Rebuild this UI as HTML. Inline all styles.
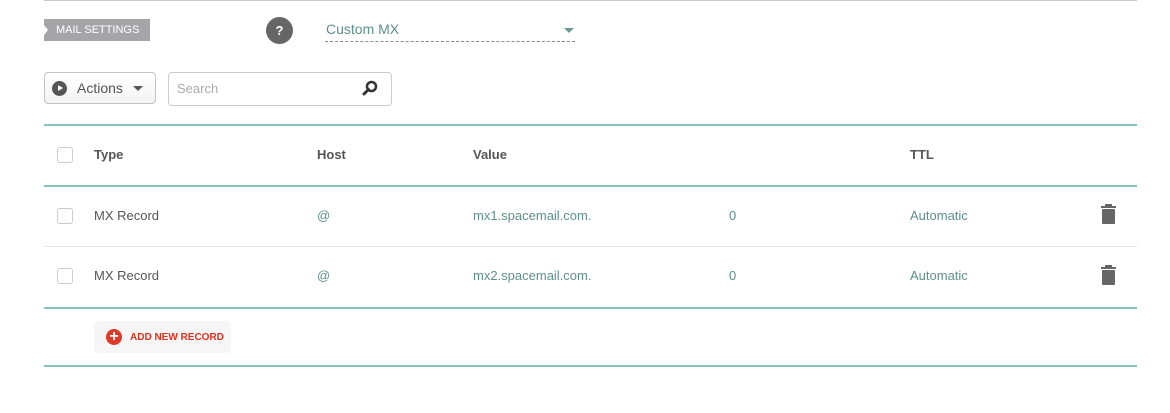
<!DOCTYPE html>
<html><head><style>
body{margin:0;width:1170px;height:413px;background:#fff;font-family:"Liberation Sans",sans-serif;position:relative;overflow:hidden}
.a{position:absolute}
.t{font-size:13px;color:#555}
.g{font-size:13px;color:#5e8f8b}
.hl{position:absolute;left:44px;width:1093px;height:2px;background:#85c2bd}
.cb{position:absolute;left:57px;width:14px;height:14px;border:1px solid #ccc;border-radius:3px;background:#fff}
.h{font-size:13px;font-weight:bold;color:#555}
</style></head><body>
<div class="a" style="left:44px;top:0;width:1093px;height:1px;background:#ccc"></div>
<div class="a" style="left:44px;top:19px;width:106px;height:22px;background:#a5a5a7;color:#fff;font-size:11px;line-height:22px;padding-left:12px;box-sizing:border-box">MAIL SETTINGS</div>
<div class="a" style="left:44px;top:25px;width:0;height:0;border-left:4px solid #fff;border-top:5px solid transparent;border-bottom:5px solid transparent"></div>
<div class="a" style="left:266px;top:17px;width:27px;height:27px;border-radius:50%;background:#666;color:#fff;font-weight:bold;font-size:13px;text-align:center;line-height:27px">?</div>
<div class="a g" style="left:326px;top:21px;font-size:14px">Custom MX</div>
<div class="a" style="left:325px;top:41px;width:250px;border-top:1px dashed #888"></div>
<div class="a" style="left:564px;top:28px;border-left:5px solid transparent;border-right:5px solid transparent;border-top:5px solid #6a9a96"></div>
<div class="a" style="left:44px;top:72px;width:112px;height:32px;border:1px solid #c4c4c4;border-radius:4px;background:linear-gradient(#fff,#f3f3f3);box-sizing:border-box"></div>
<div class="a" style="left:52px;top:81px;width:15px;height:15px;border-radius:50%;background:#555"></div>
<div class="a" style="left:58px;top:85px;border-left:5px solid #fff;border-top:3.5px solid transparent;border-bottom:3.5px solid transparent"></div>
<div class="a" style="left:77px;top:80px;font-size:14px;color:#555">Actions</div>
<div class="a" style="left:133px;top:86px;border-left:5px solid transparent;border-right:5px solid transparent;border-top:5px solid #555"></div>
<div class="a" style="left:168px;top:72px;width:224px;height:34px;border:1px solid #ccc;border-radius:4px;box-sizing:border-box"></div>
<div class="a" style="left:177px;top:81px;font-size:13px;color:#aaa">Search</div>
<svg class="a" style="left:362px;top:80px" width="16" height="16"><circle cx="9.5" cy="6.5" r="4.5" fill="none" stroke="#333" stroke-width="2.5"/><line x1="6.5" y1="9.5" x2="2" y2="14" stroke="#333" stroke-width="3" stroke-linecap="round"/></svg>
<div class="hl" style="top:124px"></div>
<div class="cb" style="top:147px"></div>
<div class="a h" style="left:94px;top:147px">Type</div>
<div class="a h" style="left:317px;top:147px">Host</div>
<div class="a h" style="left:473px;top:147px">Value</div>
<div class="a h" style="left:910px;top:147px">TTL</div>
<div class="hl" style="top:185px"></div>
<div class="cb" style="top:208px"></div>
<div class="a t" style="left:94px;top:208px">MX Record</div>
<div class="a g" style="left:317px;top:208px">@</div>
<div class="a g" style="left:473px;top:208px">mx1.spacemail.com.</div>
<div class="a g" style="left:729px;top:208px">0</div>
<div class="a g" style="left:910px;top:208px">Automatic</div>
<div class="a" style="left:44px;top:246px;width:1093px;height:1px;background:#e5e5e5"></div>
<div class="cb" style="top:268px"></div>
<div class="a t" style="left:94px;top:268px">MX Record</div>
<div class="a g" style="left:317px;top:268px">@</div>
<div class="a g" style="left:473px;top:268px">mx2.spacemail.com.</div>
<div class="a g" style="left:729px;top:268px">0</div>
<div class="a g" style="left:910px;top:268px">Automatic</div>
<svg class="a" style="left:1100px;top:204px" width="17" height="21"><rect x="5" y="0" width="7" height="3" fill="#666"/><rect x="1" y="2" width="15" height="2" fill="#666"/><rect x="2" y="5" width="13" height="15" rx="1" fill="#666"/></svg>
<svg class="a" style="left:1100px;top:265px" width="17" height="21"><rect x="5" y="0" width="7" height="3" fill="#666"/><rect x="1" y="2" width="15" height="2" fill="#666"/><rect x="2" y="5" width="13" height="15" rx="1" fill="#666"/></svg>
<div class="hl" style="top:307px"></div>
<div class="a" style="left:94px;top:321px;width:137px;height:32px;background:#f6f6f6;border-radius:4px"></div>
<div class="a" style="left:106px;top:329px;width:16px;height:16px;border-radius:50%;background:#de3a2a;color:#fff;text-align:center;line-height:16px;font-size:16px;font-weight:bold">+</div>
<div class="a" style="left:130px;top:332px;font-size:10px;font-weight:bold;color:#e0301e">ADD NEW RECORD</div>
<div class="hl" style="top:365px"></div>
</body></html>
